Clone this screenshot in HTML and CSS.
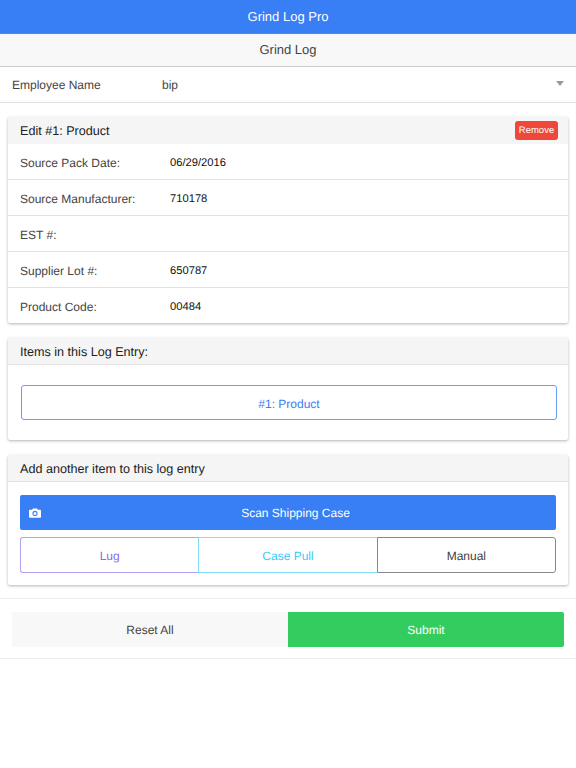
FILE: index.html
```html
<!DOCTYPE html>
<html lang="en">
<head>
    <meta charset="UTF-8">
    <title>Grind Log Pro</title>
    <link rel="stylesheet" href="styles.css">
</head>
<body>
    <div class="navbar">Grind Log Pro</div>
    <div class="subbar">Grind Log</div>

    <div class="select-row">
        <span class="select-label">Employee Name</span>
        <span class="select-value">bip</span>
        <span class="select-arrow"></span>
    </div>

    <div class="card card-edit">
        <div class="card-header">
            <span>Edit #1: Product</span>
            <button class="remove">Remove</button>
        </div>
        <div class="field"><span class="field-label">Source Pack Date:</span><span class="field-value">06/29/2016</span></div>
        <div class="field"><span class="field-label">Source Manufacturer:</span><span class="field-value">710178</span></div>
        <div class="field"><span class="field-label">EST #:</span><span class="field-value"></span></div>
        <div class="field"><span class="field-label">Supplier Lot #:</span><span class="field-value">650787</span></div>
        <div class="field"><span class="field-label">Product Code:</span><span class="field-value">00484</span></div>
    </div>

    <div class="card">
        <div class="card-header">Items in this Log Entry:</div>
        <div class="items-body">
            <button class="item-button">#1: Product</button>
        </div>
    </div>

    <div class="card card-add">
        <div class="card-header">Add another item to this log entry</div>
        <div class="add-body">
            <button class="scan">
                <svg class="camera" viewBox="0 0 14 11" width="12" height="10">
                    <path fill="#fff" fill-rule="evenodd" d="M1 1.8h2.6L4.6.3h4.8l1 1.5H13a1 1 0 0 1 1 1V10a1 1 0 0 1-1 1H1a1 1 0 0 1-1-1V2.8a1 1 0 0 1 1-1zM7 3a3 3 0 1 0 0 6 3 3 0 0 0 0-6zm0 1.2a1.8 1.8 0 1 1 0 3.6 1.8 1.8 0 0 1 0-3.6z"/>
                </svg>
                Scan Shipping Case
            </button>
            <div class="button-group">
                <button class="lug">Lug</button>
                <button class="case-pull">Case Pull</button>
                <button class="manual">Manual</button>
            </div>
        </div>
    </div>

    <div class="actions">
        <button class="reset">Reset All</button>
        <button class="submit">Submit</button>
    </div>
</body>
</html>
```

FILE: styles.css
```css
body {
    margin: 0;
    font-family: "Liberation Sans", Arial, sans-serif;
    font-size: 12px;
    color: #444;
    background-color: #fff;
    text-rendering: geometricPrecision;
}
button {
    font-family: inherit;
    font-size: 12px;
    background: none;
    cursor: pointer;
    text-rendering: geometricPrecision;
}
.navbar {
    height: 33px;
    line-height: 33px;
    background-color: #387ef5;
    color: #fff;
    text-align: center;
    font-size: 13px;
    border-bottom: 1px solid #4a8af0;
}
.subbar {
    height: 32px;
    line-height: 32px;
    background-color: #f8f8f8;
    color: #444;
    text-align: center;
    font-size: 13px;
    border-bottom: 1px solid #ccc;
}
.select-row {
    display: flex;
    align-items: center;
    box-sizing: border-box;
    height: 36px;
    padding: 1px 12px 0;
    border-bottom: 1px solid #e2e2e2;
}
.select-label {
    width: 150px;
}
.select-arrow {
    margin-left: auto;
    margin-top: -3px;
    border-top: 5px solid #999;
    border-left: 4px solid transparent;
    border-right: 4px solid transparent;
}
.card {
    margin: 14px 8px 15px;
    background-color: #fff;
    border-radius: 2px;
    box-shadow: 0 1px 3px rgba(0, 0, 0, 0.3);
    overflow: hidden;
}
.card-add {
    margin-bottom: 13px;
}
.card-header {
    display: flex;
    align-items: center;
    justify-content: space-between;
    box-sizing: border-box;
    height: 27px;
    padding: 2px 10px 0 12px;
    background-color: #f5f5f5;
    border-bottom: 1px solid #e2e2e2;
    color: #222;
    font-size: 12.6px;
}
.card-edit .card-header {
    border-bottom: none;
    padding-top: 0;
}
.remove {
    width: 43px;
    height: 19px;
    padding: 0;
    font-size: 9.5px;
    color: #fff;
    background-color: #ef473a;
    border: none;
    border-radius: 3px;
}
.field {
    display: flex;
    align-items: center;
    box-sizing: border-box;
    height: 36px;
    padding: 2px 0 0 12px;
    border-top: 1px solid #e2e2e2;
}
.card-header + .field {
    height: 35px;
    border-top: none;
}
.field-label {
    width: 150px;
}
.field-value {
    font-size: 11.2px;
    color: #111;
}
.items-body {
    padding: 20px 11px 20px 13px;
}
.item-button {
    display: block;
    width: 100%;
    height: 35px;
    padding: 3px 0 0;
    color: #387ef5;
    border: 1px solid #6a9df5;
    border-radius: 3px;
}
.add-body {
    padding: 13px 12px 12px;
}
.scan {
    position: relative;
    display: block;
    width: 100%;
    height: 35px;
    padding: 1px 0 0 15px;
    color: #fff;
    background-color: #387ef5;
    border: none;
    border-radius: 2px;
}
.camera {
    position: absolute;
    left: 9px;
    top: 13px;
}
.button-group {
    display: flex;
    height: 36px;
    margin-top: 7px;
}
.button-group button {
    flex: 1;
    border: 1px solid;
    padding: 2px 0 0;
}
.lug {
    color: #886aea;
    border-color: #b5a0f2 !important;
    border-right: none !important;
    border-radius: 3px 0 0 3px;
}
.case-pull {
    color: #33cdff;
    border-color: #80defc !important;
    border-right: none !important;
}
.manual {
    color: #444;
    border-color: #888 !important;
    border-radius: 0 3px 3px 0;
}
.actions {
    display: flex;
    padding: 13px 12px 11px;
    border-top: 1px solid #ececec;
    border-bottom: 1px solid #ececec;
}
.actions button {
    flex: 1;
    height: 35px;
    border: none;
}
.reset {
    color: #444;
    background-color: #f8f8f8;
    border-radius: 2px 0 0 2px;
}
.submit {
    color: #fff;
    background-color: #33cd5f;
    border-radius: 0 2px 2px 0;
}
```
